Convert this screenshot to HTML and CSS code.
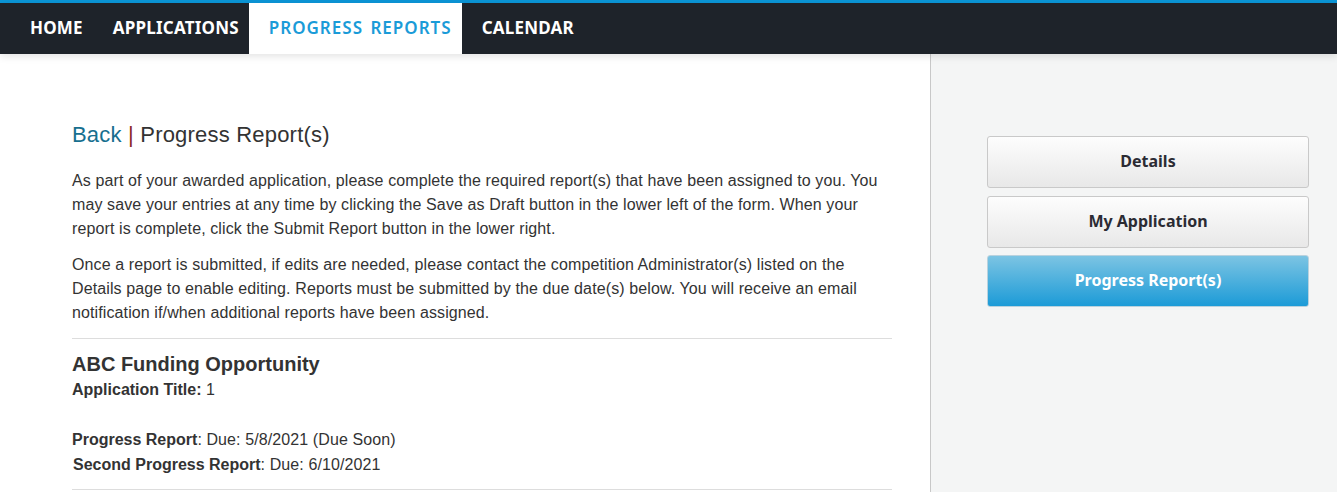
FILE: index.html
```html
<!DOCTYPE html>
<html>
<head>
<meta charset="utf-8">
<link rel="stylesheet" href="styles.css">
</head>
<body>
<div class="topline"></div>
<nav class="nav">
  <a class="nav-item">HOME</a>
  <a class="nav-item">APPLICATIONS</a>
  <a class="nav-item active">PROGRESS REPORTS</a>
  <a class="nav-item">CALENDAR</a>
</nav>
<div class="page">
  <main class="main">
    <h1 class="title"><a class="back">Back</a> <span class="sep">|</span> Progress Report(s)</h1>
    <p class="para">As part of your awarded application, please complete the required report(s) that have been assigned to you. You may save your entries at any time by clicking the Save as Draft button in the lower left of the form. When your report is complete, click the Submit Report button in the lower right.</p>
    <p class="para">Once a report is submitted, if edits are needed, please contact the competition Administrator(s) listed on the Details page to enable editing. Reports must be submitted by the due date(s) below. You will receive an email notification if/when additional reports have been assigned.</p>
    <hr class="rule">
    <h2 class="opp">ABC Funding Opportunity</h2>
    <div class="line"><b>Application Title:</b> 1</div>
    <div class="reports">
      <div class="rep"><b>Progress Report</b>: Due: 5/8/2021 (Due Soon)</div>
      <div class="rep"><b>Second Progress Report</b>: Due: 6/10/2021</div>
    </div>
    <hr class="rule">
  </main>
  <aside class="side">
    <a class="btn">Details</a>
    <a class="btn">My Application</a>
    <a class="btn btn-active">Progress Report(s)</a>
  </aside>
</div>
</body>
</html>
```
FILE: styles.css
```css
html, body { margin: 0; padding: 0; }
body {
  background: #fff;
  font-family: "Liberation Sans", Arial, sans-serif;
  color: #333;
  height: 492px;
  overflow: hidden;
}
.topline { height: 3px; background: #0b96d8; }
.nav {
  display: flex;
  height: 51px;
  background: #1e232a;
  padding-left: 10px;
  position: relative;
  z-index: 2;
  box-shadow: 0 2px 8px rgba(0,0,0,0.12);
}
.nav-item {
  display: flex;
  align-items: center;
  padding: 0 10px 3px 20px;
  color: #fff;
  font-family: "Noto Sans", sans-serif;
  font-weight: 700;
  font-size: 17px;
  letter-spacing: 0.2px;
}
.nav-item.active {
  background: #fff;
  color: #1a9bd8;
  font-weight: 600;
  letter-spacing: 1px;
  word-spacing: 2px;
}
.page {
  display: flex;
  height: 438px;
}
.main {
  width: 820px;
  padding: 69px 38px 0 72px;
  border-right: 1px solid #c8c8c8;
}
.title {
  margin: 0 0 22px;
  font-size: 22px;
  font-weight: 400;
  line-height: 24px;
  letter-spacing: 0.2px;
  color: #333;
}
.back { color: #176f8f; }
.sep { color: #8c2b24; }
.para {
  margin: 0 0 12px;
  font-size: 16px;
  line-height: 24px;
  letter-spacing: 0.11px;
}
.rule {
  border: 0;
  border-top: 1px solid #ddd;
  margin: 13px 0 0;
}
.opp {
  margin: 13px 0 0;
  font-size: 20px;
  line-height: 24px;
  font-weight: 700;
}
.line { font-size: 16px; line-height: 24px; margin-top: 2px; }
.reports { margin-top: 25px; }
.rep { font-size: 16px; line-height: 25px; letter-spacing: 0.1px; }
.rep b { letter-spacing: 0; }
.reports .rep:last-child { padding-left: 1px; }
.reports + .rule { margin-top: 12px; }
.side {
  flex: 1;
  background: #f4f5f5;
  padding: 82px 28px 0 56px;
  display: flex;
  flex-direction: column;
  gap: 7.5px;
}
.btn {
  display: flex;
  align-items: center;
  justify-content: center;
  box-sizing: border-box;
  height: 52px;
  padding-bottom: 2px;
  border: 1px solid #c9c9c9;
  border-radius: 3px;
  background: linear-gradient(#fdfdfd, #e8e8e8);
  font-family: "Noto Sans", sans-serif;
  font-weight: 700;
  font-size: 16px;
  color: #2b2b33;
}
.btn-active {
  background: linear-gradient(#7cc4e3, #1c9bd7);
  border-color: #b9d2de;
  color: #fff;
}
```
